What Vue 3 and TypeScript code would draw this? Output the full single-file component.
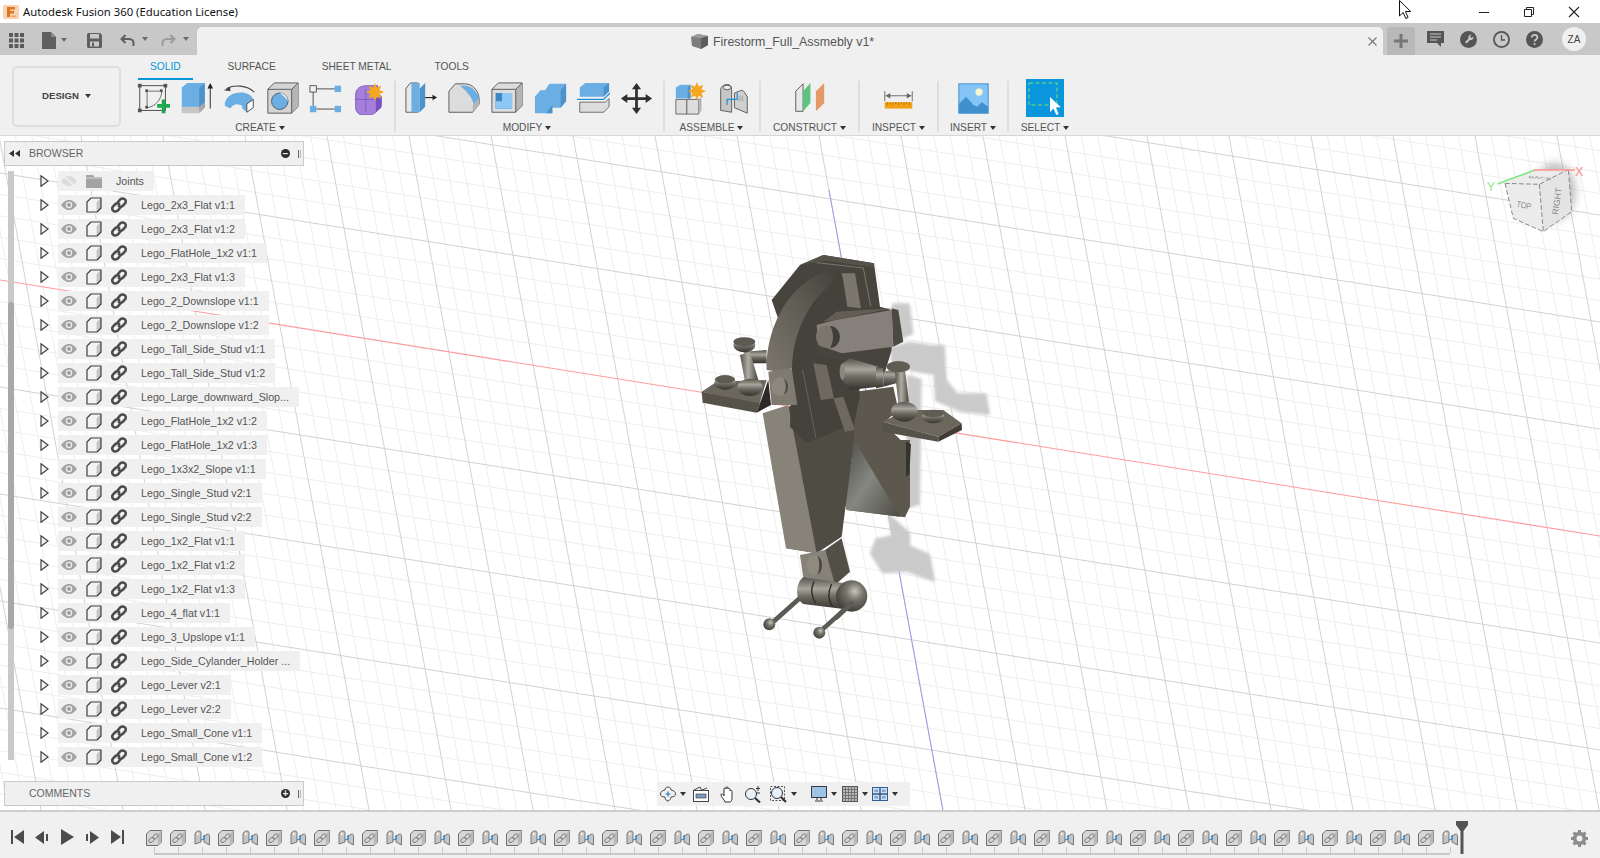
<script setup lang="ts">
const names: string[] = [
  'Lego_2x3_Flat v1:1','Lego_2x3_Flat v1:2','Lego_FlatHole_1x2 v1:1','Lego_2x3_Flat v1:3',
  'Lego_2_Downslope v1:1','Lego_2_Downslope v1:2','Lego_Tall_Side_Stud v1:1','Lego_Tall_Side_Stud v1:2',
  'Lego_Large_downward_Slop...','Lego_FlatHole_1x2 v1:2','Lego_FlatHole_1x2 v1:3','Lego_1x3x2_Slope v1:1',
  'Lego_Single_Stud v2:1','Lego_Single_Stud v2:2','Lego_1x2_Flat v1:1','Lego_1x2_Flat v1:2','Lego_1x2_Flat v1:3',
  'Lego_4_flat v1:1','Lego_3_Upslope v1:1','Lego_Side_Cylander_Holder ...','Lego_Lever v2:1','Lego_Lever v2:2',
  'Lego_Small_Cone v1:1','Lego_Small_Cone v1:2'
]
const timeline = Array.from({ length: 55 }, (_, i) => (i >= 2 && i % 2 === 0 ? 'joint' : 'cube'))

interface Line { x1: number; y1: number; x2: number; y2: number; major: boolean }
const gridLines: Line[] = []
for (let i = -40; i <= 85; i++) {
  const x = 327 + 16.4 * i
  gridLines.push({ x1: x, y1: 136, x2: x + 0.184 * 675, y2: 811, major: i % 5 === 0 })
}
for (let j = -35; j <= 30; j++) {
  const y = 280 + 21.4 * j
  if (j !== 0) gridLines.push({ x1: 0, y1: y, x2: 1600, y2: y + 256, major: j % 5 === 0 })
}
const minorLines = gridLines.filter(l => !l.major)
const majorLines = gridLines.filter(l => l.major)
</script>

<template>
  <div class="app">
    <svg class="defs" width="0" height="0" aria-hidden="true">
      <defs>
        <symbol id="eye" viewBox="0 0 16 10">
          <path d="M0 5C3 1 5.500 0 8 0s5 1 8 5c-3 4-5.500 5-8 5S3 9 0 5z" fill="#a3a3a3"/>
          <circle cx="8" cy="5" r="3.200" fill="#f0f0f0"/>
          <circle cx="8" cy="5" r="1.900" fill="#9a9a9a"/>
        </symbol>
        <symbol id="body" viewBox="0 0 16 16">
          <path d="M1 5L5 1h10v10l-4 4H1z" fill="#f4f4f4"/>
          <path d="M11 5l4-4v10l-4 4z" fill="#c4c4c4"/>
          <path d="M11 5v10" stroke="#c4c4c4" stroke-width=".7"/>
          <path d="M1 5L5 1h10v10l-4 4H1z" fill="none" stroke="#3f3f3f" stroke-width="1.200" stroke-linejoin="round"/>
        </symbol>
        <symbol id="link" viewBox="0 0 16 16">
          <g fill="none" stroke="#4a4a4a" stroke-width="2.500" stroke-linecap="round">
            <path d="M7 5l2-2.400c1.600-1.600 4-1.300 5 0 1 1.300 .9 3-.3 4.200L11.500 9c-1.200 1.100-2.800 1-3.700 0"/>
            <path d="M9 11l-2 2.400c-1.600 1.600-4 1.300-5 0-1-1.300-.9-3 .3-4.200L4.500 7c1.200-1.100 2.800-1 3.700 0"/>
          </g>
        </symbol>
        <symbol id="tl-cube" viewBox="0 0 16 16">
          <path d="M.5 4L4 .5h11.500V12L12 15.500H.5z" fill="#d6d6d6" stroke="#6d6d6d" stroke-width="1"/>
          <path d="M12 4l3.500-3.500V12L12 15.500z" fill="#b9b9b9"/>
          <g fill="none" stroke="#777" stroke-width=".9">
            <ellipse cx="5.500" cy="10" rx="3" ry="2" transform="rotate(-45 5.500 10)"/>
            <ellipse cx="9.500" cy="6.500" rx="3" ry="2" transform="rotate(-45 9.500 6.500)"/>
          </g>
        </symbol>
        <symbol id="tl-joint" viewBox="0 0 16 16">
          <path d="M1 14V5c0-3 2-4 4-4s2 1 2 3v8z" fill="#c6c6c6" stroke="#6d6d6d" stroke-width=".9"/>
          <path d="M10 6l4-2c1 0 1.500 1 1.500 2v9l-5.500-3z" fill="#c6c6c6" stroke="#6d6d6d" stroke-width=".9"/>
          <circle cx="4" cy="4" r="1" fill="#fff"/>
          <path d="M7 10l3-1V5" fill="none" stroke="#1e90dc" stroke-width="1.300"/>
        </symbol>
        <linearGradient id="arc" x1="1" y1="0" x2="0" y2="1">
          <stop offset="0" stop-color="#403e38"/><stop offset=".45" stop-color="#5f5c53"/><stop offset="1" stop-color="#7b776d"/>
        </linearGradient>
        <linearGradient id="fan" x1="0" y1="0" x2="1" y2="1">
          <stop offset="0" stop-color="#45453f"/><stop offset=".5" stop-color="#858880"/><stop offset="1" stop-color="#4c4a43"/>
        </linearGradient>
        <linearGradient id="metal" x1="0" y1="0" x2="0" y2="1">
          <stop offset="0" stop-color="#55524b"/><stop offset=".35" stop-color="#a8a59c"/><stop offset=".6" stop-color="#6b6860"/><stop offset="1" stop-color="#35332e"/>
        </linearGradient>
        <linearGradient id="metalv" x1="0" y1="0" x2="1" y2="0">
          <stop offset="0" stop-color="#55524b"/><stop offset=".45" stop-color="#b0ada5"/><stop offset="1" stop-color="#45433c"/>
        </linearGradient>
        <radialGradient id="ball" cx=".6" cy=".35" r=".7">
          <stop offset="0" stop-color="#c6c4bc"/><stop offset=".4" stop-color="#76736a"/><stop offset="1" stop-color="#3c3a34"/>
        </radialGradient>
        <filter id="soft" x="-20%" y="-20%" width="140%" height="140%"><feGaussianBlur stdDeviation="5"/></filter>
        <filter id="softer" x="-40%" y="-40%" width="180%" height="180%"><feGaussianBlur stdDeviation="14"/></filter>
      </defs>
    </svg>

    <header class="titlebar">
      <svg class="app-logo" width="16" height="16" viewBox="0 0 16 16">
        <rect x="0" y="1" width="16" height="14" rx="2" fill="#f7d3b4"/>
        <path d="M4 3h8v2.500H7V7h4v2.400H7V13H4z" fill="#e0751f"/>
        <rect x="8" y="11.500" width="5" height="1.500" fill="#f2a568"/>
      </svg>
      <span class="title">Autodesk Fusion 360 (Education License)</span>
      <div class="win-controls">
        <svg width="12" height="12" viewBox="0 0 12 12"><path d="M1 6.500h10" stroke="#222" stroke-width="1"/></svg>
        <svg width="12" height="12" viewBox="0 0 12 12"><path d="M1.500 3.500h7v7h-7zM3.500 3.500v-2h7v7h-2" fill="none" stroke="#222" stroke-width="1"/></svg>
        <svg width="12" height="12" viewBox="0 0 12 12"><path d="M1 1l10 10M11 1L1 11" stroke="#222" stroke-width="1.100"/></svg>
      </div>
    </header>

    <div class="tabbar">
      <div class="quick">
        <svg class="q-grid" width="15" height="15" viewBox="0 0 15 15" fill="#5b5b5b">
          <rect width="4" height="4"/><rect x="5.500" width="4" height="4"/><rect x="11" width="4" height="4"/>
          <rect y="5.500" width="4" height="4"/><rect x="5.500" y="5.500" width="4" height="4"/><rect x="11" y="5.500" width="4" height="4"/>
          <rect y="11" width="4" height="4"/><rect x="5.500" y="11" width="4" height="4"/><rect x="11" y="11" width="4" height="4"/>
        </svg>
        <svg class="q-file" width="14" height="17" viewBox="0 0 14 17"><path d="M0 0h9l5 5v12H0z" fill="#5f5f5f"/><path d="M9 0v5h5" fill="#8a8a8a"/></svg>
        <i class="caret q-c1"></i>
        <svg class="q-save" width="15" height="15" viewBox="0 0 15 15"><path d="M0 1.500A1.500 1.500 0 011.500 0H13l2 2v11.500a1.500 1.500 0 01-1.500 1.500h-12A1.500 1.500 0 010 13.500z" fill="#5f5f5f"/><rect x="3" y="1" width="9" height="4.500" fill="#c8c8c8"/><rect x="3" y="8.500" width="9" height="5" fill="#c8c8c8"/><rect x="5" y="9.500" width="2" height="4" fill="#5f5f5f"/></svg>
        <svg class="q-undo" width="15" height="13" viewBox="0 0 15 13"><path d="M5.500 1L1.500 5l4 4M2 5h7c3 0 4.500 2 4.500 4v3" fill="none" stroke="#5f5f5f" stroke-width="2"/></svg>
        <i class="caret q-c2"></i>
        <svg class="q-redo" width="15" height="13" viewBox="0 0 15 13"><path d="M9.500 1l4 4-4 4M13 5H6C3 5 1.500 7 1.500 9v3" fill="none" stroke="#9a9a9a" stroke-width="2"/></svg>
        <i class="caret q-c3"></i>
      </div>
      <div class="doc-tab">
        <svg class="doc-icon" width="17" height="15" viewBox="0 0 17 15"><path d="M0 3l7-3 10 2v9l-7 4-9-3z" fill="#7d7d7d"/><path d="M10 4l7-2v9l-7 4z" fill="#5c5c5c"/><path d="M0 3l10 1 7-2-10-2z" fill="#9c9c9c"/></svg>
        <span class="doc-name">Firestorm_Full_Assmebly v1*</span>
        <svg class="doc-close" width="9" height="9" viewBox="0 0 9 9"><path d="M.5.500l8 8M8.500.500l-8 8" stroke="#777" stroke-width="1.100"/></svg>
      </div>
      <div class="right-tools">
        <div class="plus"><svg width="14" height="14" viewBox="0 0 14 14"><path d="M7 0v14M0 7h14" stroke="#777" stroke-width="3"/></svg></div>
        <svg class="rt-i" width="17" height="17" viewBox="0 0 17 17"><path d="M0 0h17v12h-3v4l-4-4H0z" fill="#555"/><path d="M3 3h11M3 6h11M3 9h7" stroke="#c8c8c8" stroke-width="1"/></svg>
        <svg class="rt-i" width="17" height="17" viewBox="0 0 17 17"><circle cx="8.500" cy="8.500" r="8.500" fill="#555"/><path d="M11.500 3.500a3 3 0 00-3 4L5 11l1.500 1.500 3.500-3.500a3 3 0 003.500-3.500l-2 1.500-1.500-1.500z" fill="#c8c8c8"/></svg>
        <svg class="rt-i" width="17" height="17" viewBox="0 0 17 17"><circle cx="8.500" cy="8.500" r="8.500" fill="#555"/><circle cx="8.500" cy="8.500" r="6.300" fill="#c8c8c8" stroke="#fff" stroke-width=".4"/><path d="M8.500 4v5H12" fill="none" stroke="#555" stroke-width="1.300"/></svg>
        <svg class="rt-i" width="17" height="17" viewBox="0 0 17 17"><circle cx="8.500" cy="8.500" r="8.500" fill="#555"/><path d="M5.800 6.500c0-1.700 1.200-2.700 2.800-2.700s2.800 1 2.800 2.400c0 2.300-2.800 2.100-2.800 4.300" fill="none" stroke="#c8c8c8" stroke-width="1.800"/><circle cx="8.600" cy="13" r="1.100" fill="#c8c8c8"/></svg>
        <div class="avatar">ZA</div>
      </div>
    </div>

    <section class="toolbar">
      <div class="design"><span>DESIGN</span><i class="caret dark"></i></div>
      <div class="tool-main">
        <nav class="tabs">
          <span class="tab active">SOLID</span>
          <span class="tab t2">SURFACE</span>
          <span class="tab t3">SHEET METAL</span>
          <span class="tab t4">TOOLS</span>
        </nav>
        <div class="groups">
          <div class="group g-create">
            <div class="icons">
              <svg class="ic" viewBox="0 0 36 36">
                <g fill="none" stroke="#444" stroke-width="1"><rect x="3" y="4" width="28" height="27"/><path d="M11 10h16M11 10v18M27 11C26 20 20 26 12 28" stroke="#666"/></g>
                <g fill="#555"><rect x="1" y="2" width="4" height="4"/><rect x="29" y="2" width="4" height="4"/><rect x="1" y="29" width="4" height="4"/><rect x="9" y="8" width="3" height="3"/><rect x="25" y="8" width="3" height="3"/><rect x="9" y="26" width="3" height="3"/></g>
                <path d="M22 24h5v-5h4v5h5v4h-5v6h-4v-6h-5z" fill="#1ea84f"/>
              </svg>
              <svg class="ic" viewBox="0 0 36 36">
                <path d="M2 6l6-5h19v26l-6 5H2z" fill="#6aaee3"/><path d="M21 6l6-5v26l-6 5z" fill="#4d92c9"/>
                <path d="M2 27h19v7H2z" fill="#c5c5c5"/><path d="M21 27l6-5v6l-6 6z" fill="#a9a9a9"/>
                <path d="M33 29V3M30.500 7L33 2l2.500 5" fill="#222" stroke="#222" stroke-width="1"/>
              </svg>
              <svg class="ic" viewBox="0 0 36 36">
                <path d="M2 23C4 14 14 10 24 12c5 1 8 4 9 7l-7 5v9l-5-4v-3c-5-3-10-2-13 3l-6-3z" fill="#6aaee3"/>
                <path d="M26 24l7-5v9l-7 5z" fill="#fff" stroke="#444"/>
                <path d="M4 7C12 3 26 3 34 11" fill="none" stroke="#444" stroke-width="1.200"/>
                <path d="M1 9l7-4 0 5z" fill="#444"/>
              </svg>
              <svg class="ic" viewBox="0 0 36 36">
                <path d="M2 8l7-7h26v26l-7 7H2z" fill="#d5d5d5" stroke="#555"/>
                <path d="M28 8l7-7v26l-7 7z" fill="#b5b5b5"/><path d="M2 8h26v26M28 8l7-7" fill="none" stroke="#555"/>
                <circle cx="15" cy="21" r="9" fill="#6aaee3" stroke="#555"/><path d="M15 12a9 9 0 019 9c-3-4-5-6-9-9z" fill="#eee"/>
              </svg>
              <svg class="ic" viewBox="0 0 36 36">
                <rect x="1" y="4" width="7" height="7" fill="#f0f0f0" stroke="#555"/><rect x="28" y="4" width="7" height="7" fill="#6aaee3"/>
                <rect x="1" y="26" width="7" height="7" fill="#6aaee3"/><rect x="28" y="26" width="7" height="7" fill="#6aaee3"/>
                <path d="M8 7.500h20M4.500 11v15M8 29.500h20" stroke="#444" stroke-width="1"/>
              </svg>
              <svg class="ic" viewBox="0 0 36 36">
                <path d="M4 14c0-7 5-10 12-10h12v8l4 4v10l-6 7c-2 2-5 3-8 3h-6c-5 0-8-4-8-8z" fill="#a47fdc" stroke="#7e5cc0"/>
                <path d="M3 19h24M15 8v25" stroke="#7e5cc0" stroke-width="1"/><path d="M26 18l6-3v13l-6 5z" fill="#7950bf"/>
                <path d="M25 1l2 5 5-2-2 5 5 2-5 2 2 5-5-2-2 5-2-5-5 2 2-5-5-2 5-2-2-5 5 2z" fill="#f5a623"/>
              </svg>
            </div>
            <div class="lbl">CREATE<i class="caret dark"></i></div>
          </div>
          <div class="group g-modify">
            <div class="icons">
              <svg class="ic" viewBox="0 0 36 36">
                <path d="M1 7l5-6h8v32H1z" fill="#e8e8e8" stroke="#555"/><path d="M7 1h9v32H7z" fill="#6aaee3"/><path d="M16 7l6-6v26l-6 6z" fill="#4d92c9"/>
                <path d="M22 17h10" stroke="#222" stroke-width="1.200"/><path d="M30 14l5 3-5 3z" fill="#222"/>
              </svg>
              <svg class="ic" viewBox="0 0 36 36">
                <path d="M1 10l7-8h10c9 0 15 7 16 16v6l-7 9H1z" fill="#dcdcdc" stroke="#555"/>
                <path d="M13 4h6c8 1 13 7 15 14l-6 7c-1-7-6-14-15-21z" fill="#6aaee3"/>
                <path d="M27 33v-8l7-7v7z" fill="#b5b5b5"/>
              </svg>
              <svg class="ic" viewBox="0 0 36 36">
                <path d="M1 8l7-7h26v25l-7 7H1z" fill="#ddd" stroke="#555"/><path d="M27 8l7-7v25l-7 7z" fill="#b5b5b5"/>
                <path d="M1 8h26v25M27 8l7-7" fill="none" stroke="#555"/>
                <rect x="5" y="12" width="18" height="17" fill="#3f88c5"/><path d="M12 12h11v17H5v-8h7z" fill="#8cc7f5"/>
              </svg>
              <svg class="ic" viewBox="0 0 36 36">
                <path d="M12 9l5-7h18v19l-6 7h-9v6H1V16l6-7z" fill="#6aaee3"/><path d="M29 9l6-7v19l-6 7zM20 25l-7 9h7z" fill="#4d92c9"/>
              </svg>
              <svg class="ic" viewBox="0 0 36 36">
                <path d="M3 6l6-5h26v9l-6 6H3z" fill="#6aaee3"/><path d="M29 6l6-5v9l-6 6z" fill="#4d92c9"/>
                <path d="M0 19h29l7-7" fill="none" stroke="#1e90dc" stroke-width="1.500"/>
                <path d="M3 22h28l4-4v9l-6 6H3z" fill="#dcdcdc" stroke="#666"/>
              </svg>
              <svg class="ic" viewBox="0 0 36 36">
                <path d="M18 1l5 7h-3.500v8.500H28V13l7 5-7 5v-3.500h-8.500V28H23l-5 7-5-7h3.500v-8.500H8V23l-7-5 7-5v3.500h8.500V8H13z" fill="#2f2f2f"/>
              </svg>
            </div>
            <div class="lbl">MODIFY<i class="caret dark"></i></div>
          </div>
          <div class="group g-assemble">
            <div class="icons">
              <svg class="ic" viewBox="0 0 36 36">
                <path d="M2 19h12v16H2z" fill="#ddd" stroke="#666"/><path d="M14 19h13v16H14z" fill="#ddd" stroke="#666"/><path d="M27 19l3-4v16l-3 4z" fill="#b5b5b5"/>
                <path d="M2 6l5-3h11v15H2z" fill="#6aaee3"/><path d="M15 6l3-3v15h-3z" fill="#4d92c9"/>
                <path d="M25 0l2 5 5-2-2 5 5 2-5 2 2 5-5-2-2 5-2-5-5 2 2-5-5-2 5-2-2-5 5 2z" fill="#f5a623"/>
              </svg>
              <svg class="ic" viewBox="0 0 36 36">
                <path d="M4 31V9c0-5 5-7 9-6 2 1 3 2 3 5v25z" fill="#c6c6c6" stroke="#555"/>
                <ellipse cx="11" cy="6" rx="4" ry="2.500" fill="#eee" stroke="#555"/>
                <path d="M19 12l8-3 2 1 4 6v18l-14-6z" fill="#d0d0d0" stroke="#555"/>
                <path d="M23 15h6v6h-6z" fill="#bbb"/><path d="M11 25v-6h11v-7" fill="none" stroke="#1e90dc" stroke-width="1.300"/>
              </svg>
            </div>
            <div class="lbl">ASSEMBLE<i class="caret dark"></i></div>
          </div>
          <div class="group g-construct">
            <div class="icons">
              <svg class="ic" viewBox="0 0 36 36">
                <path d="M3 10l8-8v30H3z" fill="#e8e8e8" stroke="#555"/>
                <path d="M11 32V10l8-9v22z" fill="#5cc47f"/><path d="M25 32V10l9-9v22z" fill="#e39a66"/>
              </svg>
            </div>
            <div class="lbl">CONSTRUCT<i class="caret dark"></i></div>
          </div>
          <div class="group g-inspect">
            <div class="icons">
              <svg class="ic" viewBox="0 0 36 36">
                <path d="M3 10v11M33 10v11M4 15h28" stroke="#666" stroke-width="1"/><path d="M9 12l-5 3 5 3zM27 12l5 3-5 3z" fill="#666"/>
                <rect x="3" y="22" width="30" height="7" fill="#f0a010"/>
                <path d="M6 22v3M9 22v2M12 22v3M15 22v2M18 22v3M21 22v2M24 22v3M27 22v2M30 22v3" stroke="#a86c00" stroke-width=".8"/>
              </svg>
            </div>
            <div class="lbl">INSPECT<i class="caret dark"></i></div>
          </div>
          <div class="group g-insert">
            <div class="icons">
              <svg class="ic" viewBox="0 0 36 36">
                <rect x="2" y="2" width="32" height="32" fill="#85c4f7" stroke="#3d8dc9"/>
                <circle cx="24" cy="11" r="4" fill="#f8f6cf"/>
                <path d="M2 34V24l8-8 8 9 4 2 5-5 7 5v7z" fill="#3f90cc"/>
              </svg>
            </div>
            <div class="lbl">INSERT<i class="caret dark"></i></div>
          </div>
          <div class="group g-select">
            <div class="icons">
              <svg class="sel" width="38" height="38" viewBox="0 0 38 38">
                <rect width="38" height="38" fill="#0a96dc"/>
                <rect x="3" y="4" width="28" height="22" fill="none" stroke="#7be36b" stroke-width="1" stroke-dasharray="4 2.500"/>
                <path d="M24 18l0 15 3.500-3.500 2.800 6.500 2.400-1-2.800-6.500 5-.2z" fill="#fff"/>
              </svg>
            </div>
            <div class="lbl">SELECT<i class="caret dark"></i></div>
          </div>
        </div>
      </div>
    </section>

    <main class="viewport">
      <svg class="canvas" width="1600" height="674" viewBox="0 136 1600 674">
        <line v-for="(l, i) in minorLines" :key="'m' + i" :x1="l.x1" :y1="l.y1" :x2="l.x2" :y2="l.y2" stroke="#eeeeee" stroke-width="1"/>
        <line v-for="(l, i) in majorLines" :key="'M' + i" :x1="l.x1" :y1="l.y1" :x2="l.x2" :y2="l.y2" stroke="#d2d2d2" stroke-width="1"/>
        <line x1="0" y1="280" x2="1600" y2="536" stroke="#ff9c9c" stroke-width="1.100"/>
        <line x1="829" y1="190" x2="943" y2="811" stroke="#9a9cee" stroke-width="1"/>

        <g transform="translate(660 240) scale(.3333)">
          <g fill="#cacaca" stroke="#cacaca" stroke-width="10" stroke-linejoin="round" filter="url(#soft)">
            <path d="M700 195h45l10 85-30 10-25-5z"/>
            <path d="M695 325l55-15 65 10 35 0 5 100 35 45 85 0 10 55-85-10-70-30-5-80-65-10-60-20z"/>
            <path d="M745 410l35 10-5 370-30 10z"/>
            <path d="M690 830l55 50 0 40 60 25 15 75-80-30-70 5-35-55 15-40 50-10z"/>
          </g>
          <!-- rear block -->
          <path d="M420 75L490 45l152 25 18 130 35 10 0 120-30 100-260-50-70-200z" fill="#47443d"/>
          <path d="M490 45l152 25-2 12-148-20-72 13z" fill="#55524a"/>
          <path d="M470 68l140 16 22 115" stroke="#7a766c" stroke-width="3" fill="none"/>
          <path d="M545 100l40 0 18 105-42-5z" fill="#7b776d"/>
          <!-- rear fin -->
          <path d="M585 455l115-15 15 70-45 40 52 50 28 0 0 200-15 32-175-22-5-20 20-130z" fill="#5c584e"/>
          <path d="M570 580l150 250-160-20-5-20 20-130z" fill="url(#fan)"/>
          <path d="M738 605l15 8-5 90-10 8z" fill="#35332e"/>
          <!-- hull -->
          <path d="M385 500L600 440l-15 110-10 110-30 230-75 50-90-15z" fill="#4f4c44"/>
          <path d="M308 520l77-25 85 445-92-15z" fill="#878378"/>
          <!-- arc interior -->
          <path d="M395 380C400 260 460 160 548 110l14 90-72 45-30 60 10 40 110 25 20 100-20 80-140 60-50-50z" fill="#45423b"/>
          <path d="M460 370l40 5 22 100-40 5z" fill="#6d695f"/>
          <path d="M520 475l30-5 35 100-30 5z" fill="#6d695f"/>
          <path d="M428 390l40 205" stroke="#777369" stroke-width="2"/>
          <!-- arc band -->
          <path d="M320 390C318 250 400 110 525 88l22 20C460 160 400 260 396 385l-40 10z" fill="url(#arc)"/>
          <path d="M325 395l70-10 17 110-77 0z" fill="#7f7b70"/>
          <ellipse cx="360" cy="440" rx="26" ry="28" fill="#8c887d"/><path d="M370 415a26 28 0 010 50c10-15 10-35 0-50z" fill="#4e4b44"/>
          <!-- box -->
          <path d="M525 240l170-30 5 110-155 20-70-25-5-60z" fill="#85817a"/>
          <path d="M490 245l40-30 165-10-170 35z" fill="#625e55"/>
          <path d="M695 205l20 5 15 95-30 15z" fill="#4c4941"/>
          <ellipse cx="498" cy="290" rx="30" ry="33" fill="#7a766c"/><path d="M510 258a30 33 0 010 66c12-20 12-46 0-66z" fill="#3f3d37"/>
          <!-- left cylinder -->
          <path d="M250 335l70-5v40l-45 0-5-5z" fill="url(#metal)"/>
          <path d="M240 345l30-10 25 85-40 5z" fill="url(#metalv)"/>
          <ellipse cx="253" cy="315" rx="33" ry="22" fill="url(#metal)"/>
          <ellipse cx="253" cy="305" rx="33" ry="13" fill="#5d5a52"/>
          <!-- left plate -->
          <path d="M125 455l45-30 150-5-22 72z" fill="#6b675d"/>
          <path d="M125 455l175 35-10 28-162-30z" fill="#55524a"/>
          <path d="M290 518l10-28 25-70 8 75z" fill="#2c2a26"/>
          <ellipse cx="195" cy="428" rx="32" ry="22" fill="url(#metal)"/><ellipse cx="195" cy="418" rx="30" ry="12" fill="#5f5c54"/>
          <ellipse cx="270" cy="442" rx="38" ry="26" fill="url(#metal)"/>
          <!-- cone -->
          <path d="M545 372l25-17 85 25 0 60-85 10-25-30z" fill="url(#metal)"/>
          <ellipse cx="547" cy="395" rx="8" ry="24" fill="#8a877d"/>
          <path d="M648 380l22 5 0 55-22 5z" fill="url(#metal)"/>
          <path d="M670 395l50-10 5 40-55 15z" fill="url(#metal)"/>
          <path d="M705 395l30-5 12 95-32 5z" fill="url(#metalv)"/>
          <ellipse cx="715" cy="380" rx="35" ry="17" fill="#5f5c54"/>
          <!-- right plate -->
          <path d="M668 545l72-35 110 0 55 40-70 40z" fill="#6b675d"/>
          <path d="M668 545l167 45v15l-167-30z" fill="#555249"/>
          <path d="M835 590l70-40 1 20-71 35z" fill="#403d36"/>
          <ellipse cx="733" cy="515" rx="40" ry="30" fill="url(#metal)"/>
          <ellipse cx="820" cy="530" rx="34" ry="20" fill="url(#metal)"/><ellipse cx="820" cy="520" rx="32" ry="11" fill="#5f5c54"/>
          <!-- bottom tab -->
          <path d="M420 945l75-15 30 100-95-15z" fill="#86827a"/>
          <path d="M495 930l50-35 25 100-45 40z" fill="#524f47"/>
          <ellipse cx="462" cy="975" rx="22" ry="30" fill="#8f8b81"/><path d="M472 948a22 30 0 010 56c8-16 8-40 0-56z" fill="#4a4740"/>
          <!-- axle -->
          <path d="M430 1065L335 1150M575 1090L480 1175" stroke="#5b5a54" stroke-width="14" stroke-linecap="round"/>
          <circle cx="328" cy="1153" r="18" fill="url(#ball)"/><circle cx="478" cy="1178" r="18" fill="url(#ball)"/>
          <path d="M430 1012L555 1030l20 80-145-18C405 1080 405 1030 430 1012z" fill="url(#metal)"/>
          <circle cx="575" cy="1068" r="47" fill="url(#ball)"/>
          <path d="M462 1025c-10 20-8 45 5 65M515 1032c-12 25-10 50 3 68" fill="none" stroke="#2d2b27" stroke-width="4"/>
          <path d="M575 1090L530 1132" stroke="#5b5a54" stroke-width="14" stroke-linecap="round"/>
        </g>

        <g transform="translate(1460 150) scale(.3333)">
          <ellipse cx="285" cy="125" rx="60" ry="85" fill="#8a8a8a" opacity=".6" filter="url(#softer)"/>
          <path d="M135 100l87-40 103-2-87 45zM135 100l103 3 12 142-90-40z" fill="#ececec"/>
          <path d="M238 103l87-45 10 127-85 60z" fill="#e4e4e4"/>
          <g fill="none" stroke="#888" stroke-width="3" stroke-dasharray="14 7">
            <path d="M135 100l103 3 87-45M238 103l12 142M135 100l25 105 90 40 85-60-10-127"/>
          </g>
          <path d="M112 102l113-42" stroke="#7fe67f" stroke-width="5"/>
          <path d="M222 60h123" stroke="#ff8f8f" stroke-width="5"/>
          <text x="0" y="0" class="cube-b" transform="translate(205 84) rotate(5) scale(1 .4)">BACK</text>
          <text x="80" y="124" class="cube-g">Y</text>
          <text x="345" y="78" class="cube-r">X</text>
          <text x="0" y="0" class="cube-t" transform="translate(168 170) rotate(12) scale(.85 1)">TOP</text>
          <text x="0" y="0" class="cube-t" transform="translate(294 195) rotate(-82)">RIGHT</text>
        </g>
      </svg>

      <aside class="panel browser">
        <svg class="rew" width="11" height="7" viewBox="0 0 11 7"><path d="M5 0v7L0 3.500zM11 0v7L6 3.500z" fill="#333"/></svg>
        <span class="panel-title">BROWSER</span>
        <span class="round-btn">−</span>
        <i class="grip"></i>
      </aside>

      <div class="scroll"><div class="thumb"></div></div>

      <ul class="tree">
        <li class="row">
          <svg class="expander" width="9" height="12" viewBox="0 0 9 12"><path d="M1 .7L8 6 1 11.300z" fill="#f4f4f4" stroke="#444" stroke-width="1.200"/></svg>
          <div class="row-bg joints">
            <svg class="eye off" width="16" height="10" viewBox="0 0 16 10"><path d="M0 5c3-4 5.500-5 8-5s5 1 8 5c-3 4-5.500 5-8 5S3 9 0 5z" fill="#dcdcdc"/><path d="M2 0l12 10" stroke="#f0f0f0" stroke-width="1.500"/></svg>
            <svg class="folder" width="16" height="13" viewBox="0 0 16 13"><path d="M0 0h7l1.500 2H16v11H0z" fill="#a3a3a3"/><path d="M0 3h16" stroke="#e4e4e4" stroke-width=".8"/></svg>
            <span class="name jname">Joints</span>
          </div>
        </li>
        <li v-for="(n, i) in names" :key="i" class="row">
          <svg class="expander" width="9" height="12" viewBox="0 0 9 12"><path d="M1 .7L8 6 1 11.300z" fill="#f4f4f4" stroke="#444" stroke-width="1.200"/></svg>
          <div class="row-bg">
            <svg class="eye" width="16" height="10"><use href="#eye"/></svg>
            <svg class="cube" width="16" height="16"><use href="#body"/></svg>
            <svg class="lnk" width="16" height="16"><use href="#link"/></svg>
            <span class="name">{{ n }}</span>
          </div>
        </li>
      </ul>

      <aside class="panel comments">
        <span class="panel-title solo">COMMENTS</span>
        <span class="round-btn">+</span>
        <i class="grip"></i>
      </aside>

      <div class="navbar">
        <svg class="nv orbit" width="16" height="16" viewBox="0 0 16 16"><path d="M8 1c2 0 3 1.500 3 3 3 .5 4.500 2 4.500 4s-2 3-4.500 3c-.5 2-1.500 4-3 4s-3-1.500-3-4C2 11 .5 10 .5 8s1.500-3.500 4.500-4c0-2 1-3 3-3z" fill="none" stroke="#3a3a3a" stroke-width=".9"/><path d="M8 5.500v5M5.500 8h5" stroke="#1e78c8" stroke-width="1.200"/></svg>
        <i class="caret dark mini"></i>
        <svg class="nv cap" width="16" height="16" viewBox="0 0 16 16"><rect x=".5" y="4.500" width="15" height="11" fill="#fff" stroke="#444"/><rect x="3" y="8" width="10" height="4" fill="#7b9ac2" stroke="#444" stroke-width=".7"/><path d="M1 4l6-3 1.500 3M9 4l5-2" fill="none" stroke="#444"/></svg>
        <svg class="nv hand" width="16" height="17" viewBox="0 0 16 17"><path d="M5 16c-1-3-4-5-4-7s2-1 3 1V3c0-1.500 2-1.500 2 0v-1c0-1.500 2-1.500 2 0v1c0-1 2-1 2 .5v1.500c0-1 2-1 2 .5V12c0 2-1 4-2 4z" fill="#fff" stroke="#333" stroke-width="1"/></svg>
        <svg class="nv zm" width="18" height="17" viewBox="0 0 18 17"><circle cx="7" cy="8" r="5.500" fill="#e6f1fb" stroke="#333"/><path d="M11 12l5 4.500" stroke="#333" stroke-width="2.200"/><path d="M14 0v5M12 2.500h4M12 7h4" stroke="#333" stroke-width="1"/></svg>
        <svg class="nv zw" width="17" height="17" viewBox="0 0 17 17"><rect x=".5" y=".5" width="14" height="14" fill="none" stroke="#555" stroke-dasharray="2 1.500"/><circle cx="7" cy="7" r="5.500" fill="#e6f1fb" stroke="#333"/><path d="M11 11l5 5" stroke="#333" stroke-width="2.200"/></svg>
        <i class="caret dark mini"></i>
        <svg class="nv disp" width="16" height="16" viewBox="0 0 16 16"><rect x=".5" y=".5" width="15" height="11" fill="#9fc3e8" stroke="#3a3a3a"/><path d="M6 12v2M10 12v2M4 15h8" stroke="#3a3a3a" stroke-width="1.100"/></svg>
        <i class="caret dark mini"></i>
        <svg class="nv grd" width="16" height="16" viewBox="0 0 16 16"><rect x=".5" y=".5" width="15" height="15" fill="#b6b6bc" stroke="#555"/><path d="M3.500 0v16M6.500 0v16M9.500 0v16M12.500 0v16M0 3.500h16M0 6.500h16M0 9.500h16M0 12.500h16" stroke="#666" stroke-width=".8"/></svg>
        <i class="caret dark mini"></i>
        <svg class="nv vws" width="16" height="14" viewBox="0 0 16 14"><rect x=".5" y=".5" width="15" height="13" fill="#cfdff0" stroke="#2f5d92"/><path d="M8 0v14M0 7h16" stroke="#2f5d92" stroke-width="1.500"/><path d="M2.500 2.500h3.500v2.500H2.500zM10 2.500h3.500v2.500H10zM2.500 9h3.500v2.500H2.500zM10 9h3.500v2.500H10z" fill="#7fa6d1"/></svg>
        <i class="caret dark mini"></i>
      </div>
    </main>

    <footer class="timeline">
      <div class="player">
        <svg width="13" height="14" viewBox="0 0 13 14"><path d="M0 0h2v14H0zM13 0v14L3 7z" fill="#4b4b4b"/></svg>
        <svg width="14" height="13" viewBox="0 0 14 13"><path d="M9 0v13L0 6.500zM11 3h2v7h-2z" fill="#4b4b4b"/></svg>
        <svg width="13" height="16" viewBox="0 0 13 16"><path d="M0 0l13 8-13 8z" fill="#4b4b4b"/></svg>
        <svg width="14" height="13" viewBox="0 0 14 13"><path d="M5 0v13l9-6.500zM1 3h2v7H1z" fill="#4b4b4b"/></svg>
        <svg width="13" height="14" viewBox="0 0 13 14"><path d="M11 0h2v14h-2zM0 0v14l10-7z" fill="#4b4b4b"/></svg>
      </div>
      <div class="track">
        <div v-for="(t, i) in timeline" :key="i" class="step">
          <svg width="16" height="16"><use :href="t === 'joint' ? '#tl-joint' : '#tl-cube'"/></svg>
          <i class="tick"></i>
        </div>
        <div class="rail"></div>
        <svg class="marker" width="12" height="33" viewBox="0 0 12 33"><path d="M0 0h12v4l-4.500 6V33h-3V10L0 4z" fill="#555"/></svg>
      </div>
      <svg class="gear" width="17" height="17" viewBox="0 0 17 17">
        <circle cx="8.500" cy="8.500" r="5" fill="none" stroke="#8c8c8c" stroke-width="3.400"/>
        <path d="M8.500 0v17M0 8.500h17M2.500 2.500l12 12M14.500 2.500l-12 12" stroke="#8c8c8c" stroke-width="3"/>
        <circle cx="8.500" cy="8.500" r="3" fill="#f0f0f0"/>
      </svg>
    </footer>

    <svg class="pointer" width="13" height="20" viewBox="0 0 13 20"><path d="M.5.500v15.500l3.700-3.500 2.600 6 2.300-1-2.600-6h5.200z" fill="#fff" stroke="#111" stroke-width="1"/></svg>
  </div>
</template>

<style>
html, body { margin: 0; padding: 0; background: #f0f0f0; }
</style>

<style scoped>
.app { position: relative; width: 1600px; height: 858px; display: flex; flex-direction: column; overflow: hidden; font-family: "Liberation Sans", Arial, sans-serif; color: #555; background: #f0f0f0; }
.defs { position: absolute; }
.caret { display: inline-block; width: 0; height: 0; border-left: 3.500px solid transparent; border-right: 3.500px solid transparent; border-top: 4px solid #6a6a6a; }
.caret.dark { border-top-color: #333; }
.caret.mini { margin: 0 0 0 4px; }

.titlebar { height: 23px; background: #fff; display: flex; align-items: center; padding-left: 3px; box-sizing: border-box; flex: none; }
.app-logo { margin-right: 4px; }
.title { font-family: "Noto Sans", sans-serif; font-size: 11.300px; color: #111; }
.win-controls { margin-left: auto; display: flex; gap: 33px; margin-right: 20px; align-items: center; }

.tabbar { height: 32px; background: #c8c8c8; display: flex; flex: none; }
.quick { width: 197px; position: relative; flex: none; }
.quick > * { position: absolute; }
.q-grid { left: 9px; top: 10px; }
.q-file { left: 42px; top: 9px; }
.q-c1 { left: 61px; top: 15px; }
.q-save { left: 87px; top: 10px; }
.q-undo { left: 120px; top: 11px; }
.q-c2 { left: 142px; top: 14px; }
.q-redo { left: 161px; top: 11px; }
.q-c3 { left: 183px; top: 14px; }
.doc-tab { flex: none; width: 1186px; margin-top: 4px; background: #f0f0f0; border-radius: 5px 5px 0 0; display: flex; align-items: center; position: relative; }
.doc-icon { margin-left: 494px; }
.doc-name { margin: 2px 0 0 5px; font-size: 12.400px; color: #555; }
.doc-close { position: absolute; right: 6px; top: 10px; }
.right-tools { flex: 1; display: flex; align-items: center; position: relative; }
.plus { margin: 4px 0 0 4px; width: 28px; height: 28px; background: #b8b8b8; border-radius: 3px 3px 0 0; display: flex; align-items: center; justify-content: center; }
.rt-i { margin-left: 16px; margin-top: 1px; }
.right-tools .plus + .rt-i { margin-left: 12px; }
.avatar { width: 24px; height: 24px; margin-left: 19px; border-radius: 50%; background: #f0f0f0; font-size: 10px; color: #444; display: flex; align-items: center; justify-content: center; }

.toolbar { height: 81px; flex: none; background: #f0f0f0; border-bottom: 1px solid #d8d8d8; box-sizing: border-box; display: flex; }
.design { width: 109px; height: 61px; margin: 11px 0 0 12px; padding-bottom: 2px; border: 2px solid #dedede; border-radius: 5px; box-sizing: border-box; display: flex; align-items: center; justify-content: center; gap: 6px; font-size: 9.600px; font-weight: bold; color: #444; flex: none; }
.tool-main { margin-left: 11px; flex: 1; display: flex; flex-direction: column; }
.tabs { height: 25px; flex: none; display: flex; align-items: flex-start; position: relative; padding-left: 6px; }
.tab { font-size: 10.200px; color: #555; line-height: 12px; margin-top: 6px; }
.tab.active { color: #0696d7; padding: 0 12px 5px; border-bottom: 2px solid #0696d7; }
.t2 { margin-left: 35px; }
.t3 { margin-left: 46px; }
.t4 { margin-left: 43px; }
.groups { display: flex; flex: 1; }
.group { display: flex; flex-direction: column; box-sizing: border-box; flex: none; height: 51px; margin-top: 1px; border-right: 2px solid #dedede; position: relative; }
.icons { display: flex; gap: 10px; height: 38px; flex: none; align-items: center; margin-top: -2px; }
.ic { width: 33px; height: 33px; flex: none; }
.lbl { font-size: 10.200px; color: #555; display: flex; align-items: center; gap: 3px; justify-content: center; line-height: 12px; margin-top: 5px; flex: none; }
.g-create { width: 264px; padding-left: 5px; }
.g-create .lbl { padding-right: 11px; }
.g-modify { width: 269px; padding-left: 9px; }
.g-modify .lbl { padding-right: 14px; }
.g-assemble { width: 96px; padding-left: 9px; }
.g-assemble .lbl { padding-right: 10px; }
.g-construct { width: 99px; }
.g-construct .icons, .g-inspect .icons, .g-insert .icons, .g-select .icons { justify-content: center; }
.g-inspect { width: 79px; }
.g-insert { width: 70px; }
.g-select { width: 72px; border-right: none; }
.sel { flex: none; }

.viewport { flex: 1; position: relative; background: #fff; overflow: hidden; }
.canvas { display: block; }
.panel { position: absolute; left: 4px; width: 300px; height: 25px; box-sizing: border-box; background: #f0f0f0; border: 1px solid #c9c9c9; display: flex; align-items: center; }
.browser { top: 5px; }
.comments { top: 645px; }
.rew { margin-left: 4px; }
.panel-title { font-size: 10.500px; color: #666; margin-left: 9px; margin-top: -1px; }
.panel-title.solo { margin-left: 24px; }
.round-btn { margin-left: auto; width: 9px; height: 9px; border-radius: 50%; background: #2c2c2c; color: #f0f0f0; font-size: 10px; line-height: 9px; text-align: center; font-weight: bold; }
.grip { margin: 0 2px 0 8px; width: 1px; height: 8px; border-left: 1px solid #666; border-right: 1px solid #bbb; }
.scroll { position: absolute; left: 8px; top: 35px; width: 6px; height: 589px; background: #c9c9c9; }
.thumb { margin-top: 131px; height: 327px; background: #a8a8a8; border-radius: 3px; }
.tree { position: absolute; left: 40px; top: 35px; margin: 0; padding: 0; list-style: none; display: flex; flex-direction: column; gap: 4px; align-items: flex-start; }
.row { height: 20px; display: flex; align-items: center; }
.expander { flex: none; }
.row-bg { margin-left: 9px; height: 20px; background: #f0f0f0; display: flex; align-items: center; padding-right: 10px; }
.eye { margin-left: 3px; }
.cube { margin-left: 9px; }
.lnk { margin-left: 9px; }
.folder { margin-left: 9px; }
.name { font-size: 10.700px; color: #555; margin-left: 14px; white-space: nowrap; }
.jname { margin-left: 14px; }
.navbar { position: absolute; left: 657px; top: 646px; width: 253px; height: 24px; background: #f0f0f0; display: flex; align-items: center; padding-left: 3px; box-sizing: border-box; }
.cap { margin-left: 7px; }
.hand { margin-left: 11px; }
.zm { margin-left: 8px; }
.zw { margin-left: 8px; }
.disp { margin-left: 14px; }
.grd { margin-left: 5px; }
.vws { margin-left: 4px; }

.timeline { height: 48px; flex: none; box-sizing: border-box; border-top: 2px solid #cecece; background: #f0f0f0; display: flex; position: relative; }
.player { position: absolute; left: 11px; top: 17px; display: flex; align-items: center; gap: 11.400px; }
.track { position: absolute; left: 146px; top: 18px; display: flex; gap: 8px; }
.step { width: 16px; height: 26px; position: relative; }
.step svg { display: block; }
.tick { position: absolute; left: 8px; top: 17px; width: 1px; height: 6px; background: #c8c8c8; }
.rail { position: absolute; left: 8px; top: 23px; width: 1296px; height: 2px; background: #c8c8c8; }
.marker { position: absolute; left: 1310px; top: -9px; }
.gear { position: absolute; left: 1571px; top: 18px; }

.pointer { position: absolute; left: 1399px; top: 0; }
.cube-g { font: 38px "Liberation Sans", sans-serif; fill: #8fe88f; }
.cube-r { font: 38px "Liberation Sans", sans-serif; fill: #ff8f8f; }
.cube-t { font: 26px "Liberation Sans", sans-serif; fill: #8a8a8a; }
.cube-b { font: 26px "Liberation Sans", sans-serif; fill: #8a8a8a; }
</style>
